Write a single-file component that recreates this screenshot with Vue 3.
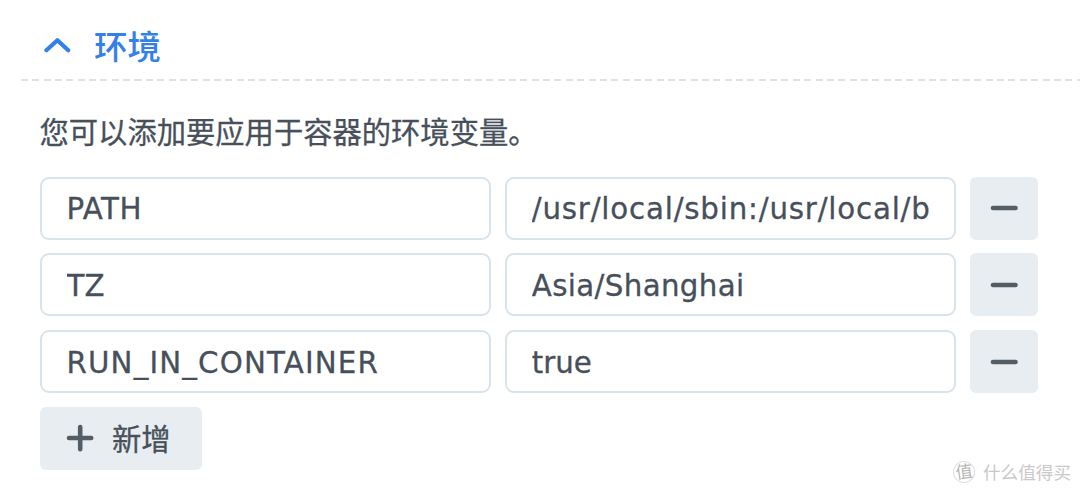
<template>
    <section class="environment">
        <header class="section-header">
            <svg class="chevron" width="28" height="18" viewBox="0 0 28 18">
                <path d="M3.4 14.2 L14.4 4.2 L25.2 14.2" />
            </svg>
            <h2>环境</h2>
        </header>
        <div class="divider"></div>

        <div class="content">
            <p class="description">您可以添加要应用于容器的环境变量。</p>

            <div v-for="(item, index) in variables" :key="item.id" class="row">
                <input v-model="item.name" :class="['field', 'field-name-' + item.id]" type="text" spellcheck="false">
                <input v-model="item.value" :class="['field', 'field-value-' + item.id]" type="text" spellcheck="false">
                <button class="remove" type="button" @click="removeVariable(index)">
                    <svg width="28" height="28" viewBox="0 0 28 28">
                        <path d="M3 14 H25.5" />
                    </svg>
                </button>
            </div>

            <button class="add" type="button" @click="addVariable">
                <svg width="28" height="28" viewBox="0 0 28 28">
                    <path d="M3 14 H25.2 M14.2 3 V25.2" />
                </svg>
                <span class="add-label">新增</span>
            </button>
        </div>

        <div class="watermark">
            <span class="watermark-logo">值</span>
            <span>什么值得买</span>
        </div>
    </section>
</template>

<script setup>
import { ref } from 'vue';

const variables = ref([
    { id: 1, name: 'PATH', value: '/usr/local/sbin:/usr/local/b' },
    { id: 2, name: 'TZ', value: 'Asia/Shanghai' },
    { id: 3, name: 'RUN_IN_CONTAINER', value: 'true' },
]);

let nextId = 4;

function addVariable() {
    variables.value.push({ id: nextId++, name: '', value: '' });
}

function removeVariable(index) {
    variables.value.splice(index, 1);
}
</script>

<style>
body {
    background: #fff;
}
</style>

<style scoped>
.environment {
    position: relative;
    box-sizing: border-box;
    width: 1080px;
    height: 495px;
    overflow: hidden;
    color: #47505a;
    font-family: Verdana, "DejaVu Sans", "Noto Sans CJK SC", sans-serif;
}

.section-header {
    display: flex;
    align-items: center;
    box-sizing: border-box;
    height: 79px;
    padding: 11px 0 0 43px;
    color: #3480e9;
}

.chevron {
    margin-right: 23px;
}

h2 {
    margin: 0;
    font-family: "Noto Sans CJK SC", sans-serif;
    font-size: 33.5px;
    font-weight: 500;
    line-height: 50px;
}

svg path {
    fill: none;
    stroke: #535d66;
    stroke-width: 4.6;
    stroke-linecap: round;
}

.chevron path {
    stroke: #3480e9;
    stroke-width: 4.2;
    stroke-linejoin: round;
}

.divider {
    height: 2px;
    margin-left: 21px;
    background: repeating-linear-gradient(to right, #d9e3eb 0 7px, transparent 7px 11.35px);
}

.content {
    display: flex;
    flex-direction: column;
    align-items: flex-start;
    gap: 14px;
    padding: 27px 42px 0 39.5px;
}

.description {
    margin: 0 0 10.5px;
    font-family: "Noto Sans CJK SC", sans-serif;
    font-size: 29.3px;
    line-height: 44px;
    -webkit-text-stroke: 0.3px;
}

.row {
    display: grid;
    grid-template-columns: 1fr 1fr 68px;
    gap: 14px;
    width: 100%;
    height: 62.8px;
}

.field {
    box-sizing: border-box;
    min-width: 0;
    height: 63px;
    padding: 2px 20px 0 25px;
    color: inherit;
    background: #fff;
    border: 2px solid #d9e3ec;
    border-radius: 9px;
    outline: none;
    font-family: inherit;
    font-size: 29.3px;
    -webkit-text-stroke: 0.3px;
}

.field-name-1 {
    letter-spacing: 0.5px;
}

.field-value-1 {
    letter-spacing: 0.8px;
}

.field-value-2 {
    letter-spacing: 0.35px;
}

.field-name-3 {
    letter-spacing: 1.15px;
}

button {
    display: flex;
    align-items: center;
    justify-content: center;
    padding: 0;
    color: inherit;
    background: #e8edf1;
    border: 0;
    border-radius: 6px;
    height: 63px;
}

.add {
    gap: 18px;
    width: 162.5px;
    padding-right: 5px;
    font-family: "Noto Sans CJK SC", sans-serif;
    font-size: 29.3px;
    -webkit-text-stroke: 0.3px;
}

.add-label {
    padding-bottom: 3px;
}

.watermark {
    position: absolute;
    right: 9px;
    bottom: 11px;
    display: flex;
    align-items: center;
    gap: 8px;
    color: #c9c9c9;
    font-family: "Noto Sans CJK SC", sans-serif;
    font-size: 17.6px;
    line-height: 24px;
}

.watermark-logo {
    box-sizing: border-box;
    width: 22px;
    height: 22px;
    border: 1px solid #dedede;
    border-radius: 50%;
    color: #b5b5b5;
    font-size: 17px;
    line-height: 18px;
    text-align: center;
    transform: rotate(-8deg);
}
</style>
